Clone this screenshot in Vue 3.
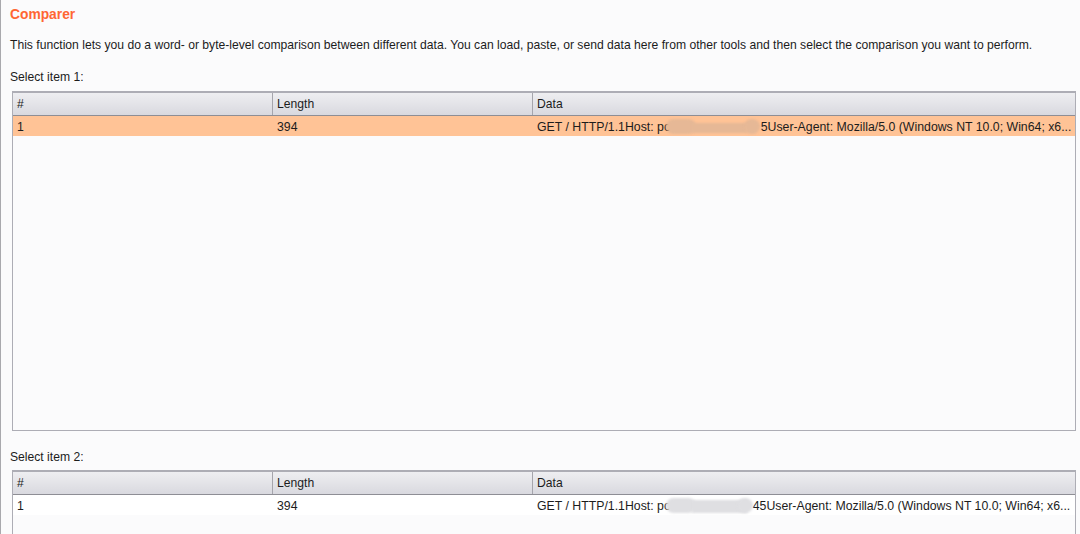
<script setup>
const tables = [
  {
    label: 'Select item 1:',
    selected: true,
    height: 340,
    rest: '5User-Agent: Mozilla/5.0 (Windows NT 10.0; Win64; x6...'
  },
  {
    label: 'Select item 2:',
    selected: false,
    height: 90,
    rest: '45User-Agent: Mozilla/5.0 (Windows NT 10.0; Win64; x6...'
  }
]
</script>

<template>
  <div class="page">
    <h1 class="title">Comparer</h1>
    <p class="intro">This function lets you do a word- or byte-level comparison between different data. You can load, paste, or send data here from other tools and then select the comparison you want to perform.</p>

    <section v-for="table in tables" :key="table.label" class="item">
      <div class="label">{{ table.label }}</div>
      <div class="table" :style="{ height: table.height + 'px' }">
        <div class="head">
          <div class="col col-num">#</div>
          <div class="col col-len">Length</div>
          <div class="col col-data">Data</div>
        </div>
        <div class="row" :class="{ selected: table.selected }">
          <div class="cell col-num">1</div>
          <div class="cell col-len">394</div>
          <div class="cell col-data">
            GET / HTTP/1.1Host: po<span class="redact" :class="{ long: !table.selected }"><i class="blob b1"></i><i class="blob b2"></i><i class="blob b3"></i></span>{{ table.rest }}
          </div>
        </div>
      </div>
    </section>
  </div>
</template>

<style>
html, body {
  margin: 0;
  background: #fbfbfc;
}
</style>

<style scoped>
.page {
  width: 1080px;
  height: 534px;
  box-sizing: border-box;
  overflow: hidden;
  padding: 7px 4px 0 9px;
  background: #fbfbfc;
  border-left: 1px solid #a9a9ad;
  font-family: "Liberation Sans", Arial, sans-serif;
  font-size: 12.15px;
  color: #1c1c1c;
}

.title {
  margin: 0;
  font-size: 13.8px;
  line-height: 15px;
  font-weight: 700;
  color: #ff6633;
}

.intro {
  margin: 16px 0 0;
  line-height: 14px;
  white-space: nowrap;
}

.item {
  margin-top: 16px;
}

.item + .item {
  margin-top: 17px;
}

.label {
  line-height: 18px;
  margin-bottom: 5px;
}

.item + .item .label {
  margin-bottom: 4px;
}

.table {
  margin-left: 2px;
  box-sizing: border-box;
  border: 1px solid #adadb5;
  border-top-width: 2px;
  background: #fbfbfc;
}

.head {
  display: flex;
  height: 23px;
  box-sizing: border-box;
  border-bottom: 1px solid #8e8e95;
  background: linear-gradient(#eeeef1, #d9d9df);
  line-height: 23px;
}

.col {
  box-sizing: border-box;
  border-right: 1px solid #a5a5ac;
}

.col-data {
  flex: 1;
  border-right: 0;
  padding-left: 4px;
  min-width: 0;
}

.col-num,
.col-len {
  width: 260px;
  padding-left: 4px;
  box-sizing: border-box;
}

.row {
  display: flex;
  height: 20px;
  line-height: 22px;
  background: #fff;
}

.row.selected {
  background: #ffc396;
}

.cell {
  font-size: 12.3px;
}

.cell.col-data {
  white-space: nowrap;
  overflow: hidden;
}

.redact {
  position: relative;
  display: inline-block;
  width: 95px;
  height: 18px;
  vertical-align: -5px;
  margin-left: -5px;
}

.redact.long {
  width: 87px;
}

.blob {
  position: absolute;
  display: block;
  background: #e6b896;
  filter: blur(1px);
}

.long .blob {
  background: #dfdfe2;
}

.b1 {
  left: 0;
  top: 1px;
  width: 30px;
  height: 15px;
  border-radius: 8px;
}

.b2 {
  left: 26px;
  top: 5px;
  width: 55px;
  height: 10px;
}

.b3 {
  left: 78px;
  top: 1px;
  width: 16px;
  height: 15px;
  border-radius: 8px;
}

.long .b2 {
  top: 3px;
  height: 13px;
}

.long .b3 {
  left: 71px;
}
</style>
